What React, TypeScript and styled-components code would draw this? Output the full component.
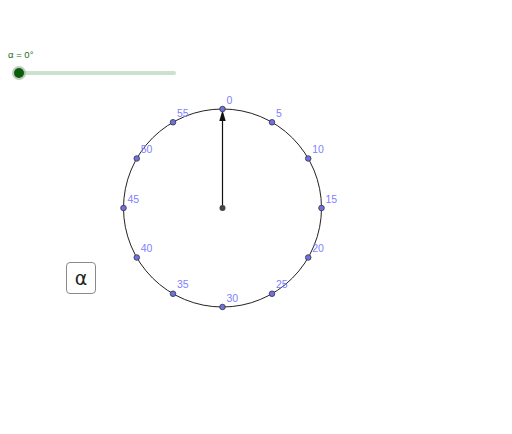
import styled, { createGlobalStyle } from 'styled-components';

const GlobalStyle = createGlobalStyle`
  html, body {
    margin: 0;
    padding: 0;
    background: #ffffff;
  }
`;

const Stage = styled.div`
  position: relative;
  width: 512px;
  height: 434px;
  overflow: hidden;
  background: #ffffff;
  font-family: "Liberation Sans", Arial, sans-serif;
`;

const Slider = styled.div`
  position: absolute;
  left: 8px;
  top: 49px;
  width: 172px;
`;

const SliderLabel = styled.div`
  font-size: 9.5px;
  line-height: 11px;
  color: #1a6b1a;
  white-space: nowrap;
`;

const Track = styled.div`
  position: relative;
  margin: 11px 0 0 11px;
  width: 157px;
  height: 4px;
  border-radius: 2px;
  background: #cde2cd;
`;

const Knob = styled.div`
  position: absolute;
  top: 50%;
  width: 10px;
  height: 10px;
  border-radius: 50%;
  background: #0b5e0b;
  box-shadow: 0 0 0 2px rgba(150, 160, 150, 0.55);
  transform: translate(-50%, -50%);
`;

const Drawing = styled.svg`
  position: absolute;
  left: 0;
  top: 0;
`;

const AlphaButton = styled.button`
  position: absolute;
  left: 66px;
  top: 262px;
  width: 30px;
  height: 32px;
  padding: 0;
  border: 1px solid #8a8a8a;
  border-radius: 4px;
  background: #ffffff;
  font-family: "DejaVu Sans", "Liberation Sans", sans-serif;
  font-size: 19px;
  color: #222;
  display: flex;
  align-items: center;
  justify-content: center;
`;

const cx = 222.5;
const cy = 208;
const r = 99;

const marks = Array.from({ length: 12 }, (_, k) => {
  const t = (k * 30 * Math.PI) / 180;
  return { value: k * 5, x: cx + r * Math.sin(t), y: cy - r * Math.cos(t) };
});

export default function App() {
  const alpha = 0;
  return (
    <Stage>
      <GlobalStyle />
      <Slider>
        <SliderLabel>α = {alpha}°</SliderLabel>
        <Track>
          <Knob style={{ left: `${(alpha / 360) * 100}%` }} />
        </Track>
      </Slider>

      <Drawing width={512} height={434} viewBox="0 0 512 434">
        <circle cx={cx} cy={cy} r={r} fill="none" stroke="#222" strokeWidth={1} />
        <line x1={cx} y1={cy} x2={cx} y2={cy - r + 9} stroke="#111" strokeWidth={1.2} />
        <polygon
          points={`${cx},${cy - r + 1} ${cx - 3.2},${cy - r + 12} ${cx + 3.2},${cy - r + 12}`}
          fill="#111"
        />
        <circle cx={cx} cy={cy} r={3} fill="#444" />
        {marks.map((m) => (
          <g key={m.value}>
            <circle cx={m.x} cy={m.y} r={2.8} fill="#7070e6" stroke="#333" strokeWidth={0.8} />
            <text
              x={m.x + 4}
              y={m.y - 5.5}
              fontSize={10.5}
              fill="#8080ff"
              fontFamily="'Liberation Sans', Arial, sans-serif"
            >
              {m.value}
            </text>
          </g>
        ))}
      </Drawing>

      <AlphaButton>α</AlphaButton>
    </Stage>
  );
}
